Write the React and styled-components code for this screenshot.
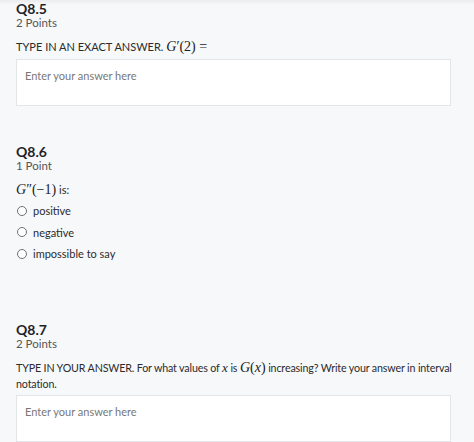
import React from 'react';
import styled, { createGlobalStyle } from 'styled-components';

const GlobalStyle = createGlobalStyle`
    html, body {
        margin: 0;
        padding: 0;
        background: #f7f8fa;
    }
    body {
        font-family: Lato, "Open Sans", "Liberation Sans", sans-serif;
        color: #333;
    }
`;

const Page = styled.div`
    min-height: 442px;
    padding: 1px 23px 0 16px;
    box-sizing: border-box;
    box-shadow: inset 0 5px 4px -3px rgba(0, 0, 0, 0.06);
    overflow: hidden;
`;

const Question = styled.section`
    margin-top: ${(p) => p.gap || 0}px;
`;

const Title = styled.h2`
    margin: 0;
    font-size: 14px;
    line-height: 16px;
    font-weight: 700;
    color: #1f2326;
`;

const Points = styled.div`
    font-size: 11.5px;
    line-height: 12px;
    color: #555;
`;

const Prompt = styled.p`
    margin: ${(p) => p.top || 8}px 0 0;
    font-size: ${(p) => p.size || 11}px;
    line-height: ${(p) => p.lh || 20}px;
    color: #2b2b2b;
    letter-spacing: ${(p) => p.ls || 0}px;
    white-space: ${(p) => (p.nowrap ? 'nowrap' : 'normal')};
`;

const Math = styled.span`
    font-family: "Liberation Serif", "DejaVu Serif", serif;
    font-size: ${(p) => p.size || 14}px;
    color: #1a1a1a;
    letter-spacing: 0;
`;

const Var = styled.i`
    font-style: italic;
`;

const AnswerBox = styled.div`
    margin-top: ${(p) => p.top || 2}px;
    height: 47px;
    background: #fff;
    border: 1px solid #e4e5e8;
    box-sizing: border-box;
    padding: 9px 8px 0;
    font-size: 11px;
    line-height: 14px;
    color: #777;
`;

const Options = styled.ul`
    list-style: none;
    margin: 0;
    padding: 0;
`;

const Option = styled.li`
    display: flex;
    align-items: center;
    gap: 6px;
    height: 21.5px;
    font-size: 11px;
    color: #2b2b2b;
`;

const Radio = styled.span`
    width: 10px;
    height: 10px;
    margin-left: 1px;
    border-radius: 50%;
    border: 1.5px solid #707070;
    background: #fff;
    box-sizing: border-box;
    flex-shrink: 0;
`;

const App = () => {
    const options = ['positive', 'negative', 'impossible to say'];

    return (
        <>
            <GlobalStyle />
            <Page>
                <Question>
                    <Title>Q8.5</Title>
                    <Points>2 Points</Points>
                    <Prompt>
                        TYPE IN AN EXACT ANSWER.{' '}
                        <Math>
                            <Var>G</Var>′(2) =
                        </Math>
                    </Prompt>
                    <AnswerBox>Enter your answer here</AnswerBox>
                </Question>

                <Question gap={38}>
                    <Title>Q8.6</Title>
                    <Points>1 Point</Points>
                    <Prompt>
                        <Math>
                            <Var>G</Var>″(−1)
                        </Math>{' '}
                        is:
                    </Prompt>
                    <Options>
                        {options.map((o) => (
                            <Option key={o}>
                                <Radio />
                                {o}
                            </Option>
                        ))}
                    </Options>
                </Question>

                <Question gap={57}>
                    <Title>Q8.7</Title>
                    <Points>2 Points</Points>
                    <Prompt top={10} lh={16} size={10.7} ls={-0.15} nowrap>
                        TYPE IN YOUR ANSWER. For what values of <Math size={13}><Var>x</Var></Math> is{' '}
                        <Math size={14}>
                            <Var>G</Var>(<Var>x</Var>)
                        </Math>{' '}
                        increasing? Write your answer in interval
                        <br />
                        notation.
                    </Prompt>
                    <AnswerBox top={3}>Enter your answer here</AnswerBox>
                </Question>
            </Page>
        </>
    );
};

export default App;
